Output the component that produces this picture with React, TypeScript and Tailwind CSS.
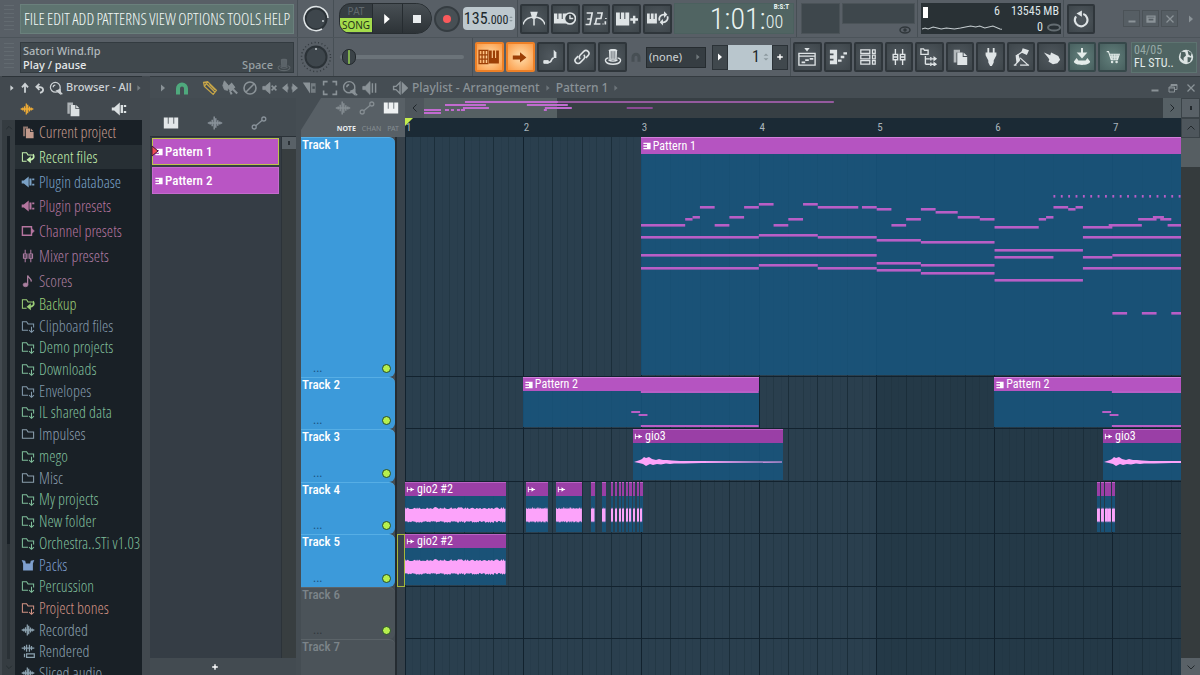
import React from 'react'

const condensed = "font-['Roboto_Condensed','Liberation_Sans_Narrow','Open_Sans',sans-serif]"
const light = "font-['Open_Sans_Condensed_Light','Open_Sans_Light_Condensed','Roboto_Condensed','Open_Sans',sans-serif]"

const icons: Record<string, React.ReactNode> = {
  wave: <path d="M1 10h18M4 8v4M6.5 6v8M9 2v16M11 4v12M13.5 6.5v7M16 8v4" strokeWidth="1.8" />,
  pages: <g fill="currentColor" stroke="none"><path d="M3 2h7v3H6v11H3z" opacity=".7" /><path d="M7 5h6v5h5v9H7z" /><path d="M14 5l4 4h-4z" /></g>,
  plug: <g fill="currentColor" stroke="none"><path d="M1 8h3l7-6v16l-7-6H1z" /><path d="M12 5h3v10h-3zM16 5h3v2.500h-3zM16 12.500h3V15h-3z" /></g>,
  folder: <path d="M2 16V4h6l2 3h8v9z" strokeWidth="1.5" />,
  folderPlus: <g strokeWidth="1.500"><path d="M10 16H2V4h6l2 3h8v5" /><path d="M15 11v8M11.500 16l3.500 3 3.500-3" /></g>,
  folderBack: <g><path d="M8 16H2V4h6l2 3h6" strokeWidth="1.500" /><path d="M17 6c3 5 0 8-5 8" strokeWidth="2.500" /><path d="M14 9v10l-6-5z" fill="currentColor" stroke="none" /></g>,
  channel: <g><path d="M2 4h13v12H2z" strokeWidth="2" /><path d="M15 6l4 4-4 4z" fill="currentColor" /></g>,
  mixer: <g strokeWidth="1.500"><path d="M6 1v6M6 13v6M14 1v6M14 13v6" /><path d="M3.500 7h5v6h-5zM11.500 7h5v6h-5zM3.500 10h5M11.500 10h5" /></g>,
  note: <g fill="currentColor"><ellipse cx="6.500" cy="15.500" rx="3.500" ry="2.700" /><path d="M9.500 15V2c1 4 6 4 5 9" fill="none" strokeWidth="1.800" /></g>,
  box: <path d="M1 3l5 1 1 4h6l1-4 5-1-2 5v10H3V8z" fill="currentColor" stroke="none" />,
  rendered: <g strokeWidth="1.800"><path d="M1 6h18M5 3v6M8 1v10M12 1v10M15 3v6" /><path d="M8 14h11v5H8zM5 14v5" /></g>,
  piano: <path d="M1 3h5v8h1V3h6v8h1V3h5v14H1z" fill="currentColor" stroke="none" />,
  curve: <g strokeWidth="1.600"><circle cx="4" cy="15" r="2.500" /><circle cx="16" cy="5" r="2.500" /><path d="M6 13.500l8-7" /></g>,
  up: <path d="M10 18V5M5 9l5-6 5 6" strokeWidth="3" />,
  undo: <path d="M10 18c7-2 8-10-4-10M9 3L4 8l5 5" strokeWidth="3" />,
  zoomer: <g strokeWidth="1.800"><circle cx="9" cy="9" r="7" /><path d="M14 14l5 5M6 9a3 3 0 0 1 3-3" /><path d="M11 14l5-2v6z" fill="currentColor" /></g>,
  magnet: <path d="M5 18v-7.500a5 5 0 0 1 10 0V18" strokeWidth="5" />,
  pencil: <path d="M2 3l5-1 11 11-4 5L3 8zM7 2L3 8M6 5l10 10M9 5l7 7" strokeWidth="1.600" />,
  brush: <g><path d="M3 1l5 6-1 6-4-1-2-5z" fill="currentColor" /><path d="M8 9l4-4 3 4-4 4zM14 12l5 5M10 13l2 5" strokeWidth="2.600" fill="currentColor" /></g>,
  no: <g strokeWidth="2"><circle cx="10" cy="10" r="7.500" /><path d="M5 15L15 5" /></g>,
  mute: <g><path d="M1 8h3l6-5v14l-6-5H1z" fill="currentColor" /><path d="M12 7l6 6M18 7l-6 6" strokeWidth="2" /></g>,
  slip: <path d="M0 10l7-6v4h1v4H7v4zM20 10l-7-6v4h-1v4h1v4z" fill="currentColor" stroke="none" />,
  slice: <g fill="currentColor" stroke="none"><path d="M1 3h9v14z" /><path d="M11 4h6v12h-6z" fillOpacity=".7" /><path d="M13 8h3v3h-3z" fill="#454e54" /></g>,
  select: <path d="M2 7V2h5M13 2h5v5M18 13v5h-5M7 18H2v-5" strokeWidth="2" />,
  speaker: <g><path d="M1 8h3l6-6v16l-6-6H1z" fill="currentColor" /><path d="M13 4v12M17 4v12" strokeWidth="1.800" /></g>,
  speakerOut: <g strokeWidth="1.800"><path d="M2 8h3l5-5v14l-5-5H2z" /><path d="M13 4l6 6-6 6z" fill="currentColor" /></g>,
  tri: <path d="M6 3l8 7-8 7z" fill="currentColor" stroke="none" />,
  metronome: <g strokeWidth="1.400"><path d="M0 15C3 6 17 6 20 15M10 5v11" /><path d="M7.500 4h5L11 9H9z" fill="currentColor" /></g>,
  pianoClock: <g><path d="M0 5h3v5h1V5h3v5h1V5h3v9H0z" fill="currentColor" stroke="none" /><circle cx="14.500" cy="9.500" r="5" fill="#3c4449" strokeWidth="1.500" /><path d="M14.500 6.500v3h3" strokeWidth="1.300" /></g>,
  countdown: <g strokeWidth="1.500"><path d="M1.500 4.500h5L5.500 10l-1 5h-4M2 10h3.500M8 14.500h1M11 4.500h4.500l-1 5h-4l-1 5h4.500M16 14.500h.8M19 9v1M18.500 12v3" /></g>,
  pianoPlus: <g><path d="M0 4h3.500v6h1V4h3v6h1V4H12v12H0z" fill="currentColor" stroke="none" /><path d="M16.500 7v7M13 10.500h7" strokeWidth="2.200" /></g>,
  pianoLoop: <g><path d="M0 5h2.500v5h1V5H6v5h1V5h2v9H0z" fill="currentColor" stroke="none" /><path d="M11.500 11.500a4 4 0 0 1 5-5.300M18.500 7.500a4 4 0 0 1-5 5.300" strokeWidth="1.600" /><path d="M15.500 3l3 3-3 3zM14.500 10v6l-3-3z" fill="currentColor" stroke="none" /></g>,
  gridPiano: <g><path d="M1 4h8v12H1zM1 8h8M1 12h8M3.700 4v12M6.400 4v12" strokeWidth="1.200" /><path d="M10 4h2.500v7h1V4h2v7h1V4H19v12h-9z" fill="currentColor" stroke="none" /></g>,
  arrow: <path d="M1 8h9V4l8 6.500-8 6.500v-4H1z" fill="currentColor" stroke="none" />,
  glide: <g><path d="M5 16h2c5 0 2-4 6-5" strokeWidth="1.800" /><path d="M2 14h5v3H2z" fill="currentColor" /><path d="M13 2l3 3v6h-3z" fill="currentColor" stroke="none" /></g>,
  link: <path d="M8 12.500a3.300 3.300 0 0 1 0-4.700l4-4a3.300 3.300 0 0 1 4.700 4.700l-2.400 2.400M12 7.500a3.300 3.300 0 0 1 0 4.700l-4 4A3.300 3.300 0 0 1 3.300 11.500l2.400-2.400" strokeWidth="1.800" />,
  hat: <g><path d="M5.500 2.500c0-2 9-2 9 0L14 13H6z" fill="currentColor" stroke="none" /><path d="M8 3.500V12M10 3.500V12M12 3.500V12" stroke="#5a6268" strokeWidth=".9" /><path d="M5 11c-6 1-4 7 5 7s11-6 5-7M5 13c2 2 8 2 10 0" strokeWidth="1.500" /></g>,
  playlist: <g><path d="M7 0h6l-3 4z" fill="currentColor" stroke="none" /><path d="M1 6h18v13H1zM1 9h18" strokeWidth="1.500" /><path d="M4 16h4M8 13.500h4M13 12h4" strokeWidth="2" /></g>,
  pianoRoll: <g><path d="M1 2h8v16H1v-4h4v-2H1V8h4V6H1z" fill="currentColor" stroke="none" /><path d="M10 14h4M13 10h4M16 6h4" strokeWidth="2.600" /></g>,
  rack: <g strokeWidth="1.400"><path d="M2 2h10v4H2zM2 8h10v4H2zM2 14h10v4H2zM15 2h3v4h-3zM15 8h3v4h-3zM15 14h3v4h-3z" /></g>,
  tree: <g strokeWidth="1.500"><path d="M1 7V1h3l1 1.500h4V7zM6 9v9M6 12h5M6 18h5M12 10v4M12 16v4M12 12h5M12 18h5" /><path d="M15 9l4 3-4 3zM15 15l4 3-4 3z" fill="currentColor" stroke="none" /></g>,
  plugin: <g fill="currentColor" stroke="none"><path d="M6 0h2v5H6zM12 0h2v5h-2zM4 5h12v3l-3 6v2l-2 4H9l-2-4v-2L4 8z" /></g>,
  broom: <g><path d="M12.500 1.500l5 1.500-1.500 3.500-4.500-2z" fill="currentColor" strokeWidth="2" /><path d="M12 4L6 8l2 6-5 5M9 11l9 8M9 19h10M2 19h3" strokeWidth="1.400" /><path d="M4 8l3-1 2 6-4 4z" fill="currentColor" stroke="none" /></g>,
  hand: <path d="M1 5l7 3 1-3 8 4 2 4-3 4-5 1-5-3 1-2-1-2z" fill="currentColor" stroke="none" />,
  download: <g><path d="M10 0v6M6.500 6L10 10l3.500-4z" fill="currentColor" strokeWidth="2.200" /><path d="M1 15l3-4 2 3h8l2-3 3 4c0 5-18 5-18 0z" fill="currentColor" stroke="none" /></g>,
  cart: <g strokeWidth="1.200"><path d="M3 4h2l3 9h7l2-6H6M7 9h9M8 11h8M9 7v6M12 7v6M14.500 7v6" /><circle cx="9" cy="15.500" r=".8" /><circle cx="14" cy="15.500" r=".8" /></g>,
  reload: <g strokeWidth="2.400"><path d="M4.500 7a7 7 0 1 0 8-2.500" /><path d="M5 4l6-3.500v7z" fill="currentColor" stroke="none" /></g>,
  globe: <g><circle cx="10" cy="10" r="9" fill="#dce4e3" stroke="none" /><path d="M4 3l5 1 1 4-3 3v4L3 11zM12 2l5 3-1 4-3-2zM12 10l5 1-2 5-3 1z" fill="#4d6260" stroke="none" /></g>,
  clipPattern: <path d="M1 2h18v16H1v-3h9v-3H1V8h9V5H1z" fill="currentColor" stroke="none" />,
  clipAudio: <g><path d="M3 4v12M3 10h15" strokeWidth="2" /><path d="M10 5l7 5-7 5z" fill="currentColor" stroke="none" /></g>,
  chevL: <path d="M13 3l-7 7 7 7" strokeWidth="2" />,
  chevR: <path d="M7 3l7 7-7 7" strokeWidth="2" />,
  chevU: <path d="M3 13l7-7 7 7" strokeWidth="2" />,
  chevD: <path d="M3 7l7 7 7-7" strokeWidth="2" />,
  close: <path d="M3 3l14 14M17 3L3 17" strokeWidth="2.500" />,
  min: <path d="M3 15h14" strokeWidth="4" />,
  max: <path d="M2 4h16v12H2zM4 8h12v6H4z" strokeWidth="2.500" />,
  restore: <path d="M2 8h11v10H2zM6 8V3h12v10h-5M2 10h11M6 5h12" strokeWidth="2" />,
  plus: <path d="M10 3v14M3 10h14" strokeWidth="3.500" />,
  spin: <path d="M10 1l6 6H4zM10 19l6-6H4z" fill="currentColor" stroke="none" />,
}

function Icon({ name, className = '' }: { name: string; className?: string }) {
  return (
    <svg viewBox="0 0 20 20" fill="none" stroke="currentColor" className={'shrink-0 ' + className} aria-hidden="true">
      {icons[name]}
    </svg>
  )
}

function ToolButton({ icon, variant = 'dark', size = 'size-[18px]' }: { icon: string; variant?: 'dark' | 'orange' | 'teal'; size?: string }) {
  const look = {
    dark: 'border-[#2f363b] bg-[radial-gradient(#50585e,#3e464b)] text-[#dfe4e6]',
    orange: 'border-[#ee8026] bg-[radial-gradient(#ffe0b0,#fb9a45)] text-[#9c3f06]',
    teal: 'border-[#36484a] bg-[radial-gradient(#63807c,#48605f)] text-[#e4ecea]',
  }[variant]
  return (
    <button aria-label={icon} className={'flex h-[30px] w-7 grow items-center justify-center rounded-xs border-2 ' + look}>
      <Icon name={icon} className={size} />
    </button>
  )
}

function Divider() {
  return <div className="h-full w-px shrink-0 bg-[#474f55]" />
}

function Grip() {
  return <div className="mx-1 h-7 w-2.5 shrink-0 bg-[repeating-linear-gradient(#626a70_0_1px,transparent_1px_4px)]" />
}

function Knob({ small = false }: { small?: boolean }) {
  return (
    <svg viewBox="0 0 32 32" className="size-8 shrink-0">
      <circle cx="16" cy="16" r="14.500" fill="none" stroke="#343b40" strokeWidth="1.500" strokeDasharray={small ? '1 2.500' : undefined} opacity={small ? 1 : 0} />
      <circle cx="16" cy="16" r="10.500" fill="#3e464c" stroke="#2b3237" strokeWidth="2" />
      {!small && <path d="M22 26a12 12 0 1 1 6-11" fill="none" stroke="#dfe4e6" strokeWidth="1.500" />}
      <circle cx={small ? 16 : 23} cy={small ? 8 : 18} r="1" fill="#c7ced1" />
    </svg>
  )
}

function TopBar() {
  const menus = ['FILE', 'EDIT', 'ADD', 'PATTERNS', 'VIEW', 'OPTIONS', 'TOOLS', 'HELP']
  const windows = ['playlist', 'pianoRoll', 'rack', 'mixer', 'tree', 'pages', 'plugin', 'broom', 'hand']
  return (
    <header className="shrink-0 bg-[#585f66]">
      {/* Menu, transport and monitor */}
      <div className="flex h-[38px] items-center border-b border-[#4c545a]">
        <Grip />
        <nav className={'ml-0.5 flex h-[30px] w-[274px] shrink-0 items-center justify-between border border-[#6a807c] bg-[#5e7470] px-[3px] text-base text-[#f2f8f6] ' + light}>
          {menus.map((m) => <button key={m}>{m}</button>)}
        </nav>
        <div className="ml-[3px] flex h-full w-[37px] shrink-0 items-center justify-center border-x border-[#474f55]"><Knob /></div>

        <div className="ml-[5px] flex h-[31px] w-[93px] shrink-0 overflow-hidden rounded-r-2xl rounded-l-xl border border-[#282e32] bg-[#363d42]">
          <div className="flex w-8 flex-col text-center text-[10px] leading-[14px] font-['Noto_Sans','Open_Sans',sans-serif]">
            <button className="text-[#60686d]">PAT</button>
            <button className="bg-[#a4dc4c] text-[#26351a]">SONG</button>
          </div>
          <button aria-label="Play" className="flex flex-1 items-center justify-center border-x border-[#262c30] bg-gradient-to-b from-[#484f54] to-[#2d3337] text-white"><Icon name="tri" className="size-3.5" /></button>
          <button aria-label="Stop" className="flex flex-1 items-center justify-center bg-gradient-to-b from-[#484f54] to-[#2d3337]"><span className="size-2 bg-[#e9edef]" /></button>
        </div>
        <button aria-label="Record" className="ml-[2px] flex size-[26px] shrink-0 items-center justify-center rounded-full border-2 border-[#353c41] bg-[#474f54]"><span className="size-2 rounded-full bg-[#fb5a5c]" /></button>
        <label className={'ml-[3px] flex h-[23px] w-[52px] shrink-0 items-center justify-center rounded-sm bg-[#bdc8ce] text-[#20282c] ' + condensed}>
          <input aria-label="Tempo" defaultValue="135" className="w-6 text-right text-base outline-none" />
          <span className="pt-0.5 text-xs">.000</span>
          <Icon name="spin" className="size-1.5 text-[#8c999f]" />
        </label>

        <div className="ml-[2px] flex h-full w-[155px] shrink-0 items-center gap-[2px] border-l border-[#474f55] pl-[2px]">
          {['metronome', 'pianoClock', 'countdown', 'pianoPlus', 'pianoLoop'].map((b) => <ToolButton key={b} icon={b} size="size-[22px]" />)}
        </div>
        <div className={'mr-0.5 ml-0.5 flex h-[31px] w-[120px] shrink-0 items-end justify-end border border-[#4b605e] bg-[#506462] pr-1 text-[#e8f3f1] ' + condensed}>
          <span className="text-[30px] leading-[29px] font-light">1:01:</span>
          <span className="flex flex-col items-start">
            <span className="pl-2 text-[7px] leading-[7px] font-bold">B:S:T</span>
            <span className="text-lg leading-[22px] font-light">00</span>
          </span>
        </div>
        <Divider />
        <div className="ml-1 h-[31px] w-[39px] shrink-0 border border-[#4b5358] bg-[#3e474c]" />
        <div className="ml-[2px] flex h-[31px] w-[73px] shrink-0 flex-col items-end gap-0.5">
          <div className="h-[21px] w-full border border-[#4b5358] bg-[#3e474c]" />
          <svg viewBox="0 0 12 8" className="mr-1 h-2 w-3 text-[#30373b]" fill="none" stroke="currentColor" strokeWidth="1.500"><ellipse cx="6" cy="4" rx="5" ry="3" /><circle cx="6" cy="4" r="1" /></svg>
        </div>
        <div className="mr-[3px] ml-0.5 h-full w-px bg-[#474f55]" />
        <div className={'grid h-[31px] w-[140px] shrink-0 grid-cols-[81px_1fr] bg-[#293135] text-xs text-[#dfe6e8] ' + condensed}>
          <div className="flex items-start justify-between px-0.5"><span className="mt-1 h-[11px] w-[5px] bg-white" />6</div>
          <div className="pr-0.5 text-right">13545 MB</div>
          <svg viewBox="0 0 80 12" preserveAspectRatio="none" className="h-3 w-full" fill="none" stroke="#c5cdd0"><path d="M1 10l3-1 3 1 5-2 4 1 4 1 5-1 8 1 6-1 10-2 5 1 4-1 5 2 8-2 7 3 7 1" /></svg>
          <div className="flex items-center justify-end gap-1 leading-4">
            0<svg viewBox="0 0 14 9" className="w-3.5" fill="none" stroke="#646d72" strokeWidth="2"><ellipse cx="7" cy="4.500" rx="6" ry="3" /></svg>
          </div>
        </div>
        <div className="mr-[3px] ml-0.5 h-full w-px bg-[#474f55]" />
        <div className="flex w-7 shrink-0"><ToolButton icon="reload" /></div>
        <div className="flex flex-1 items-center justify-end gap-[2px] text-[#8b9398]">
          {['min', 'max', 'close'].map((n) => (
            <button key={n} aria-label={n} className="flex size-[17px] items-center justify-center border border-[#4b5257] bg-[#565e64]"><Icon name={n} className="size-2.5" /></button>
          ))}
          <Icon name="tri" className="mr-1 ml-1.5 size-2.5" />
        </div>
      </div>

      {/* Hint bar and window shortcuts */}
      <div className="flex h-[38px] items-center">
        <Grip />
        <div className="ml-0.5 flex h-[31px] w-[274px] shrink-0 items-end justify-between border border-[#333b40] bg-[#40484d] px-[2px] text-[11px] leading-[14px] font-['Noto_Sans','Open_Sans',sans-serif] font-medium">
          <div>
            <p className="text-[#b1b8bb]">Satori Wind.flp</p>
            <p className="text-[#e6eaeb]">Play / pause</p>
          </div>
          <p className="flex items-center gap-1 text-[#98a0a4]">Space<Icon name="hat" className="size-3.5 text-[#5e666b]" /></p>
        </div>
        <div className="ml-[3px] flex h-full w-[37px] shrink-0 items-center justify-center border-x border-[#474f55]"><Knob small /></div>
        <input type="range" aria-label="Main pitch" defaultValue={2} className="mr-2 ml-[6px] h-1 w-[124px] shrink-0 appearance-none rounded-full bg-[#6b7379] [&::-webkit-slider-thumb]:h-4 [&::-webkit-slider-thumb]:w-3.5 [&::-webkit-slider-thumb]:appearance-none [&::-webkit-slider-thumb]:rounded-full [&::-webkit-slider-thumb]:border [&::-webkit-slider-thumb]:border-[#20262a] [&::-webkit-slider-thumb]:bg-[linear-gradient(90deg,#3b4348_42%,#7fae4e_42%_58%,#3b4348_58%)]" />
        <div className="flex h-full w-[155px] shrink-0 items-center gap-[2px] border-l border-[#474f55] pl-[2px]">
          <ToolButton icon="gridPiano" variant="orange" size="size-[22px]" />
          <ToolButton icon="arrow" variant="orange" size="size-4" />
          <ToolButton icon="glide" />
          <ToolButton icon="link" />
          <ToolButton icon="hat" />
        </div>
        <Icon name="magnet" className="mr-1 ml-[3px] size-3 text-[#474f54]" />
        <div className="relative shrink-0 text-[11px] text-[#ced4d6]">
          <select aria-label="Snap" className="block h-[21px] w-[60px] appearance-none border border-[#262c30] bg-[#363d42] pl-0.5 font-['Noto_Sans','Open_Sans',sans-serif]">
            <option>(none)</option>
          </select>
          <Icon name="tri" className="absolute top-1.5 right-1 size-2 text-[#70787c]" />
        </div>
        <div className={'ml-[6px] flex h-[25px] w-[76px] shrink-0 text-[#20282c] ' + condensed}>
          <button aria-label="Pattern menu" className="flex w-4 items-center justify-center border border-[#2b3237] bg-[#40484d] text-white"><Icon name="tri" className="size-2.5" /></button>
          <label className="flex min-w-0 flex-1 items-center bg-[#b9c6cd] pr-0.5">
            <input aria-label="Pattern number" defaultValue="1" className="w-full min-w-0 pr-0.5 text-right text-base outline-none" />
            <Icon name="spin" className="size-2 text-[#8c999f]" />
          </label>
          <button aria-label="Add pattern" className="flex w-4 items-center justify-center border border-[#2b3237] bg-[#40484d] text-white"><Icon name="plus" className="size-2" /></button>
        </div>
        <div className="mx-[2px] h-full w-px bg-[#474f55]" />
        <div className="flex flex-1 gap-[2px]">
          {windows.map((w) => <ToolButton key={w} icon={w} />)}
          <ToolButton icon="download" variant="teal" />
          <ToolButton icon="cart" variant="teal" />
        </div>
        <a href="#news" className={'mr-[3px] ml-1 flex h-[31px] w-[66px] shrink-0 items-center justify-between border border-[#5d7370] bg-[#4f6462] px-0.5 text-xs leading-[13px] ' + condensed}>
          <span><span className="block text-[#98aaa8]">04/05</span><span className="block text-[#e4ebea]">FL STU..</span></span>
          <Icon name="globe" className="size-4" />
        </a>
      </div>
    </header>
  )
}

const library = [
  ['pages', 'Current project', 'text-[#c29a8c]'],
  ['folderBack', 'Recent files', 'text-[#c4f0ae]'],
  ['plug', 'Plugin database', 'text-[#7aa1c6]'],
  ['plug', 'Plugin presets', 'text-[#b5759f]'],
  ['channel', 'Channel presets', 'text-[#b5759f]'],
  ['mixer', 'Mixer presets', 'text-[#ae7ca3]'],
  ['note', 'Scores', 'text-[#aa7f9f]'],
]

const folders = [
  ['folderBack', 'Backup', 'text-[#9bcd77]'],
  ['folderPlus', 'Clipboard files', 'text-[#8299ab]'],
  ['folderPlus', 'Demo projects', 'text-[#7fbd9a]'],
  ['folderPlus', 'Downloads', 'text-[#7fbd9a]'],
  ['folderPlus', 'Envelopes', 'text-[#8299ab]'],
  ['folderPlus', 'IL shared data', 'text-[#7fbd9a]'],
  ['folder', 'Impulses', 'text-[#8b9ead]'],
  ['folderPlus', 'mego', 'text-[#7fbd9a]'],
  ['folder', 'Misc', 'text-[#8b9ead]'],
  ['folderPlus', 'My projects', 'text-[#7fbd9a]'],
  ['folderPlus', 'New folder', 'text-[#7fbd9a]'],
  ['folderPlus', 'Orchestra..STi v1.03', 'text-[#7fbd9a]'],
  ['box', 'Packs', 'text-[#7e9fce]'],
  ['folderPlus', 'Percussion', 'text-[#7fbd9a]'],
  ['folderPlus', 'Project bones', 'text-[#d29284]'],
  ['wave', 'Recorded', 'text-[#8ba1af]'],
  ['rendered', 'Rendered', 'text-[#8ba1af]'],
  ['wave', 'Sliced audio', 'text-[#8ba1af]'],
]

function BrowserRow({ row }: { row: string[] }) {
  const [icon, name, color] = row
  return (
    <li className={'flex ' + color + (name === 'Recent files' ? ' bg-[#272f34]' : '')}>
      <button className="flex w-full items-center gap-1 pl-1.5 whitespace-nowrap">
        <Icon name={icon} className="size-3.5" />
        {name}
      </button>
    </li>
  )
}

function Browser() {
  return (
    <aside className="ml-[2px] flex w-[140px] shrink-0 flex-col overflow-hidden bg-[#42494f]">
      <div className="flex h-[22px] shrink-0 items-center gap-[3px] border-t border-[#2c3338] pl-1.5 text-[11px] font-medium whitespace-nowrap text-[#cdd2d5] font-['Noto_Sans','Open_Sans',sans-serif]">
        <Icon name="tri" className="size-2" />
        <Icon name="up" className="size-3" />
        <Icon name="undo" className="size-3" />
        <Icon name="zoomer" className="size-3.5" />
        Browser - All
        <Icon name="tri" className="size-2 text-[#757d82]" />
      </div>
      <div className="grid h-[22px] shrink-0 grid-cols-3 place-items-center pl-0.5 text-[#dbe0e2]">
        <Icon name="wave" className="size-3.5 text-[#f0ac35]" />
        <Icon name="pages" className="size-4" />
        <Icon name="plug" className="size-4" />
      </div>
      <div className="flex min-h-0 flex-1 bg-[#192026]">
        <div className="flex w-[13px] shrink-0 flex-col items-center justify-between bg-[#353c41] py-1 text-[#22292d]">
          <Icon name="chevU" className="size-2" />
          <div className="mt-1 w-[3px] flex-1 bg-gradient-to-b from-[#192026] from-78% to-[#2a3136] to-78%" />
          <Icon name="chevD" className="mt-1 size-2" />
        </div>
        <div className={'min-w-0 flex-1 overflow-hidden text-base leading-5 ' + light}>
          <ul className="grid h-[173px] auto-rows-fr">{library.map((r) => <BrowserRow key={r[1]} row={r} />)}</ul>
          <ul className="grid h-[391px] auto-rows-fr">{folders.map((r) => <BrowserRow key={r[1]} row={r} />)}</ul>
        </div>
      </div>
    </aside>
  )
}

function Picker() {
  return (
    <section className="flex w-[146px] shrink-0 flex-col bg-[#353d45]">
      <div className="flex h-[38px] shrink-0 items-center gap-7 bg-[#434b51] pt-3 pl-[13px] text-[#89929a]">
        <Icon name="piano" className="size-4 text-[#e3e7e9]" />
        <Icon name="wave" className="size-4" />
        <Icon name="curve" className="size-4" />
      </div>
      <div className="flex min-h-0 flex-1 border-t border-[#2a3137]">
        <div className={'flex flex-1 flex-col gap-[2px] px-[2px] pt-px text-[13px] font-medium text-white ' + condensed}>
          <button className="relative flex h-[27px] items-center gap-0.5 border border-[#bcc44b] bg-[#b955c4] pl-0.5">
            <Icon name="clipPattern" className="size-2" />Pattern 1
            <svg viewBox="0 0 8 12" className="absolute top-1.5 -left-0.5 h-3 w-2"><path d="M1 1l6 5-6 5z" fill="#f14b58" stroke="#40202f" /></svg>
          </button>
          <button className="flex h-[27px] items-center gap-0.5 border border-[#c56bce] bg-[#b955c4] pl-0.5"><Icon name="clipPattern" className="size-2" />Pattern 2</button>
        </div>
        <div className="w-[15px] border-l border-[#2c3339] bg-[#383e40]">
          <div className="flex h-3 items-center justify-center bg-[#596167]"><span className="h-1 w-0.5 bg-[#2a3035]" /></div>
        </div>
      </div>
      <button aria-label="Add pattern" className="flex h-[17px] shrink-0 items-center justify-center bg-[#434b51] pr-4 text-white"><Icon name="plus" className="size-2" /></button>
    </section>
  )
}

/* Lane geometry, in bars */
const VISIBLE_BARS = 6.585
const pct = (bars: number) => (bars / VISIBLE_BARS) * 100 + '%'

// start and length in 16ths, then y
const melody: number[][] = [
  [0, 6, 71], [6, 1, 65], [7, 1, 63], [8, 2, 53], [10, 2, 71], [12, 2, 63], [14, 2, 53],
  [16, 2, 50], [18, 2, 71], [20, 2, 65], [22, 2, 50], [24, 5.5, 53], [30, 2, 53],
  [32, 2, 55], [34, 2, 71], [36, 2, 65], [38, 2, 55], [40, 3, 58], [43, 3, 63], [46, 2, 65],
  [48, 6, 73], [54, 1, 65], [55, 1, 63], [56, 2, 53], [58, 1, 55], [59, 1, 53], [60, 4, 73],
  [63.5, 4.5, 71], [67.5, 2.5, 65], [69.5, 1.5, 63], [70.5, 1.5, 65], [71.5, 2, 71],
  [0, 16, 83], [16, 8, 81], [24, 8, 83], [32, 6, 86], [38, 10, 88], [48, 12, 96], [60, 14, 83],
  [0, 32, 101], [32, 6, 109], [38, 10, 111], [48, 8, 103], [60, 4, 103], [64, 10, 101],
  [0, 16, 114], [16, 8, 111], [24, 8, 114], [32, 6, 116], [38, 10, 119], [48, 12, 126], [60, 14, 114],
  [64, 2, 159], [68, 2, 159], [72, 2, 159],
  ...Array.from({ length: 18 }, (_, i) => [56 + i, 0.25, 42]),
]

const drone: number[][] = [[14.7, 1.2, 21], [15.7, 1.2, 24], [16, 16, 1], [16, 16, 35]]

function Notes({ notes, length, height }: { notes: number[][]; length: number; height: number }) {
  return (
    <svg viewBox={`0 0 ${length * 16} ${height}`} preserveAspectRatio="none" className="block w-full overflow-hidden" style={{ height }}>
      {notes.map(([x, w, y], i) => <rect key={i} x={x} y={y - 1} width={w} height={height > 100 ? 2.6 : 2} fill="#b95ec6" />)}
    </svg>
  )
}

function noisePath() {
  const top: string[] = []
  const bottom: string[] = []
  for (let i = 0; i <= 100; i++) {
    const jag = Math.abs(Math.sin(i * i * 1.7)) * 2
    top.push(`${i},${1 + jag}`)
    bottom.unshift(`${i},${17 - Math.abs(Math.cos(i * i * 2.3)) * 2}`)
  }
  return top.concat(bottom).join(' ')
}

function Noise() {
  return (
    <svg viewBox="0 0 100 18" preserveAspectRatio="none" className="mt-2.5 block h-[18px] w-full"><polygon points={noisePath()} fill="#fca3fa" /></svg>
  )
}

function Decay() {
  return (
    <svg viewBox="0 0 150 14" preserveAspectRatio="none" className="absolute top-3 left-0 block h-3.5 w-full min-w-[150px]">
      <path d="M1 7l6-2 2-1 2-2 2 1 3-1 3 2 4 1 3-1 4 1 4 0 5 .5 8 .5 12 0 10 0 80 .5v1l-80 .5-18 .5-10 0-4 .5-4-.5-5 1-4-.5-4 1-3-1-4 2-3-2-4-1z" fill="#fca3fa" />
    </svg>
  )
}

type Clip = { start: number; length: number; name: string; kind: 'melody' | 'drone' | 'noise' | 'decay' }

const slice = (start: number, length: number): Clip => ({ start, length, name: '', kind: 'noise' })

const tracks: { name: string; height: string; clips: Clip[]; off?: boolean; selected?: boolean }[] = [
  { name: 'Track 1', height: 'h-60', clips: [{ start: 2, length: 4.585, name: 'Pattern 1', kind: 'melody' }] },
  {
    name: 'Track 2', height: 'h-[52px]', clips: [
      { start: 1, length: 2, name: 'Pattern 2', kind: 'drone' },
      { start: 5, length: 1.585, name: 'Pattern 2', kind: 'drone' },
    ],
  },
  {
    name: 'Track 3', height: 'h-[53px]', clips: [
      { start: 1.935, length: 1.272, name: 'gio3', kind: 'decay' },
      { start: 5.923, length: 0.662, name: 'gio3', kind: 'decay' },
    ],
  },
  {
    name: 'Track 4', height: 'h-[52px]', clips: [
      { start: 0, length: 0.853, name: 'gio2 #2', kind: 'noise' },
      { start: 1.031, length: 0.185, name: ' ', kind: 'noise' },
      { start: 1.282, length: 0.22, name: ' ', kind: 'noise' },
      slice(1.58, 0.03), slice(1.672, 0.03),
      ...[0, 1, 2, 3, 4, 5, 6, 7, 8].map((i) => slice(1.75 + i * 0.031, 0.018)),
      ...[0, 1, 2, 3, 4].map((i) => slice(5.875 + i * 0.031, 0.025)),
    ],
  },
  { name: 'Track 5', height: 'h-[53px]', clips: [{ start: 0, length: 0.853, name: 'gio2 #2', kind: 'noise' }], selected: true },
  { name: 'Track 6', height: 'h-[52px]', clips: [], off: true },
  { name: 'Track 7', height: 'h-[53px]', clips: [], off: true },
]

function GridLines() {
  return (
    <>
      <div className="absolute inset-y-0 right-0 bg-[#243947]" style={{ left: pct(4) }} />
      {Array.from({ length: 106 }, (_, i) => (
        <div
          key={i}
          className={'absolute inset-y-0 w-px ' + (i % 16 === 0 ? 'bg-[#12222e]' : i % 4 === 0 ? 'bg-[#1b2e3a]' : i % 2 === 0 ? 'bg-[#20343f]/60' : 'bg-[#20343f]/20')}
          style={{ left: pct(i / 16) }}
        />
      ))}
    </>
  )
}

function ClipView({ clip }: { clip: Clip }) {
  const midi = clip.kind === 'melody' || clip.kind === 'drone'
  const tall = clip.kind === 'melody'
  return (
    <div className="absolute top-0 bottom-px overflow-hidden bg-[#17567f]/85" style={{ left: pct(clip.start), width: pct(clip.length) }}>
      <div className={'flex items-center gap-0.5 text-xs leading-[13px] whitespace-nowrap text-white ' + condensed + (tall ? ' h-[17px]' : ' h-3.5') + (midi ? ' border-t border-[#d27fdb] bg-[#b554c1]' : ' border-t border-[#b964c3] bg-[#9a3fa6]')}>
        {clip.name !== '' && <Icon name={midi ? 'clipPattern' : 'clipAudio'} className={midi ? 'ml-0.5 size-2' : 'ml-px size-[9px]'} />}
        {clip.name}
      </div>
      {tall && <Notes notes={melody} length={clip.length} height={200} />}
      {clip.kind === 'drone' && <Notes notes={drone} length={clip.length} height={37} />}
      {clip.kind === 'noise' && <Noise />}
      {clip.kind === 'decay' && <div className="relative"><Decay /></div>}
    </div>
  )
}

function TrackRow({ track }: { track: (typeof tracks)[number] }) {
  return (
    <div className={'flex shrink-0 ' + track.height}>
      <div className={'relative w-[94px] shrink-0 rounded-r-md border-t pl-px text-[13px] leading-[14px] font-medium ' + condensed + (track.off ? ' border-[#5b6368] bg-[#4b5359] text-[#7c8489]' : ' border-[#56aee5] bg-[#3c9ada] text-white')}>
        {track.name}
        <span className={'absolute bottom-1 left-3 text-xs leading-[10px] font-normal ' + (track.off ? 'text-[#30373c]' : 'text-[#1a5380]')}>...</span>
        <input type="checkbox" aria-label={track.name + ' on'} defaultChecked className="absolute right-1 bottom-1 size-[9px] appearance-none rounded-full border border-[#254b2b] bg-[#b6f04d]" />
      </div>
      <div className="flex w-2.5 shrink-0 border-l-2 border-[#252c32] bg-[#37424b]">
        {track.selected && <div className="flex-1 border border-[#a5b83c]" />}
      </div>
      <div className="relative flex-1 overflow-hidden border-b border-[#12222e] bg-[#2a3f4e]">
        <GridLines />
        {track.clips.map((c, i) => <ClipView key={i} clip={c} />)}
      </div>
    </div>
  )
}

// x, y, width on the song overview, in pixels of its 740px width
const overview = [
  [41, 4, 369], [21, 7, 41], [103, 7, 41], [39, 10, 26], [121, 10, 27], [203, 10, 26],
  [0, 12, 17], [0, 15, 17], [21, 12, 4], [27, 12, 3], [33, 12, 3], [37, 12, 4], [120, 12, 3],
]

function Arrangement() {
  return (
    <section className="flex min-w-0 flex-1">
      <div className="flex min-w-0 flex-1 flex-col">
        <div className="flex h-[39px] shrink-0">
          <div className="flex w-[104px] shrink-0 flex-col items-end justify-between bg-[#586066] pt-0.5 pr-1.5 pb-1 text-[#858d92] [clip-path:polygon(20px_0,100%_0,100%_100%,0_100%,0_32px)]">
            <div className="flex gap-2">
              <Icon name="wave" className="size-4" />
              <Icon name="curve" className="size-4" />
              <Icon name="piano" className="size-4 text-[#eef1f2]" />
            </div>
            <div className="flex gap-1.5 text-[7px] leading-[9px] font-['Noto_Sans','Open_Sans',sans-serif]">
              <b className="text-[#e8ecee]">NOTE</b><span>CHAN</span><span>PAT</span>
            </div>
          </div>
          <div className="flex min-w-0 flex-1 flex-col">
            <div className="flex h-5 shrink-0 bg-[#373f44]">
              <button aria-label="Scroll left" className="flex w-[19px] items-center justify-center bg-[#4e565c] text-[#1f262b]"><Icon name="chevL" className="size-2.5" /></button>
              <div className="relative flex-1">
                <div className="absolute inset-y-0 left-0 w-[18%] bg-[#566063]" />
                <svg viewBox="0 0 740 20" preserveAspectRatio="none" className="absolute inset-0 size-full">
                  {overview.map(([x, y, w], i) => <rect key={i} x={x} y={y - 1} width={w} height="2" fill={x > 134 ? '#8a4a93' : '#c26bd0'} />)}
                  <rect x="134" y="3" width="276" height="2" fill="#955a9e" />
                </svg>
              </div>
              <button aria-label="Scroll right" className="flex w-[18px] items-center justify-center bg-[#566065] text-[#1f262b]"><Icon name="chevR" className="size-2.5" /></button>
            </div>
            <div className={'relative flex-1 overflow-hidden bg-[#1b2a35] pt-px text-[11px] leading-[18px] text-[#a9b4bb] ' + condensed}>
              {[1, 2, 3, 4, 5, 6, 7].map((b) => <span key={b} className="absolute pl-px" style={{ left: pct(b - 1) }}>{b}</span>)}
              <svg viewBox="0 0 8 8" className="absolute top-0 left-0 size-2"><path d="M0 0h8L0 8z" fill="#c4ec4c" /></svg>
            </div>
          </div>
        </div>
        <div className="flex min-h-0 flex-1 flex-col overflow-hidden">
          {tracks.map((t) => <TrackRow key={t.name} track={t} />)}
        </div>
      </div>
      <div className="flex w-[19px] shrink-0 flex-col bg-[#353b3d] text-[#23292d]">
        <div className="flex h-5 items-center justify-center border border-[#3b4348] bg-[#596167]"><span className="h-1 w-0.5 bg-[#23292d]" /></div>
        <div className="flex h-5 items-center justify-center border border-[#3b4348] bg-[#4e565c]"><Icon name="chevU" className="size-2.5" /></div>
        <div className="h-[29px] bg-[#565e62]" />
        <div className="flex-1" />
        <div className="flex h-[17px] items-center justify-center bg-[#596167]"><Icon name="chevD" className="size-2.5" /></div>
      </div>
    </section>
  )
}

function PlaylistWindow() {
  const tools = ['brush', 'no', 'mute', 'slip', 'slice', 'select', 'zoomer', 'speaker']
  return (
    <div className="flex min-w-0 flex-1 flex-col bg-[#454d53]">
      <div className="flex h-[22px] shrink-0 items-center border-t border-[#343b40] pl-2 text-[#8a9297]">
        <Icon name="tri" className="mr-1.5 size-2.5" />
        <Icon name="magnet" className="mr-3 size-4 text-[#4fa97d]" />
        <div className="mr-3.5 flex gap-1">
          <Icon name="pencil" className="size-4 text-[#c6a548]" />
          {tools.map((t) => <Icon key={t} name={t} className="size-4" />)}
        </div>
        <div className="flex items-center gap-1 text-xs font-medium font-['Noto_Sans','Open_Sans',sans-serif]">
          <Icon name="speakerOut" className="size-4" />
          Playlist - Arrangement
          <Icon name="tri" className="size-2 text-[#6c7479]" />
          Pattern 1
          <Icon name="tri" className="size-2 text-[#6c7479]" />
        </div>
        <div className="flex flex-1 justify-end gap-2 pr-1">
          {['min', 'restore', 'close'].map((n) => <button key={n} aria-label={n}><Icon name={n} className="size-2.5" /></button>)}
        </div>
      </div>
      <div className="flex min-h-0 flex-1 gap-[5px]">
        <Picker />
        <Arrangement />
      </div>
    </div>
  )
}

export default function App() {
  return (
    <main className="flex h-screen flex-col overflow-hidden bg-[#42494f]">
      <TopBar />
      <div className="flex min-h-0 flex-1 gap-2">
        <Browser />
        <PlaylistWindow />
      </div>
    </main>
  )
}
